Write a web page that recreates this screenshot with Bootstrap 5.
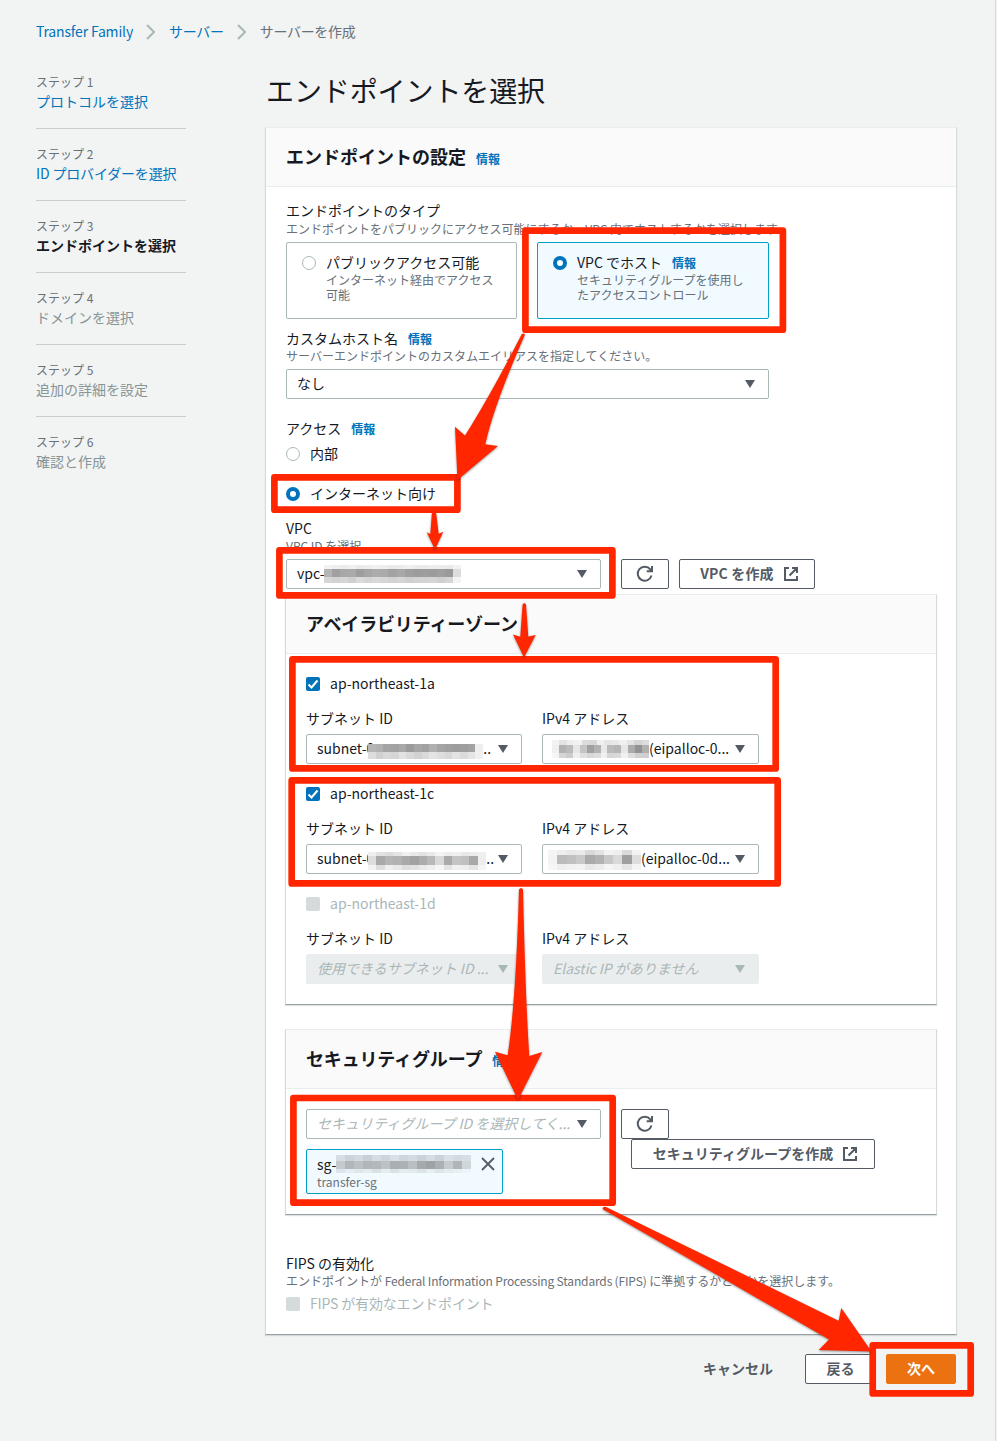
<!DOCTYPE html>
<html lang="ja">
<head>
<meta charset="utf-8">
<title>サーバーを作成</title>
<link href="https://cdn.jsdelivr.net/npm/bootstrap@5.3.0/dist/css/bootstrap.min.css" rel="stylesheet">
<style>
body{background:#f2f3f3;color:#16191f;font:14px/20px "Noto Sans CJK JP",sans-serif;height:1441px;overflow:hidden}
.page-shell{width:996px;height:1441px;border-right:1px solid #d5dbdb;padding:21px 0 0 36px}
a{color:#0073bb;text-decoration:none}
.crumbs{height:20px;color:#687078;white-space:nowrap;letter-spacing:-.3px}
.crumbs svg{margin:1px 14px 0 13px}
.steps{width:150px;margin-top:31px;flex:none}
.step{height:72px;color:#879596;white-space:nowrap}
.step b{color:#16191f}
.step small{display:block;font-size:12px;line-height:20px;color:#687078;margin-bottom:-1px}
.step:not(:last-child) hr{margin:17px 0 0;border-color:#c5cdcd;opacity:1}
.main-col{width:692px;margin-left:79px}
h1{font-size:28px;line-height:40px;font-weight:400;margin:29px 0 17px 1px;letter-spacing:-.1px}
.panel{background:#fff;border:1px solid #d5dbdb;border-top-color:#eaeded;border-bottom-color:#95a0a3;box-shadow:0 1px 1px rgba(0,28,36,.12)}
.panel-head{height:59px;background:#fafafa;border-bottom:1px solid #eaeded;padding:0 20px 2px;display:flex;align-items:center}
.panel-head h2{font-size:18px;line-height:24px;font-weight:700;margin:0}
.info{font-size:12px;font-weight:700;margin-left:10px;line-height:1}
.panel-head .info{margin-top:6px}
.main-body{padding:13px 20px 19px;height:1147px}
.desc{font-size:12px;line-height:15px;color:#687078;white-space:nowrap}
.tile{height:77px;border:1px solid #aab7b8;border-radius:2px;padding:9px 15px;display:flex;width:231px}
.tile.on{background:#f1faff;border-color:#00a1c9;width:232px}
.ctl{width:14px;height:14px;flex:none;border:1px solid #aab7b8;background:#fff;margin:4px 10px 0 0;border-radius:50%}
.ctl.on{border:4px solid #0073bb}
.box{width:14px;height:14px;flex:none;border-radius:2px;background:#0073bb;margin:4px 10px 0 0;display:flex}
.box.off{background:#d5dbdb}
.sel{height:30px;border:1px solid #aab7b8;border-radius:2px;background:#fff;padding:0 13px 2px 10px;display:flex;align-items:center;white-space:nowrap}
.sel::after{content:"";margin:2px 0 0 auto;border:5.5px solid transparent;border-top:8px solid #545b64;border-bottom:0}
.sel.dis{background:#eaeded;border-color:#eaeded;color:#aab7b8}
.sel.dis::after{border-top-color:#aab7b8}
.ph{color:#aab7b8;font-style:italic}
.btn-aws{height:30px;border:1px solid #545b64;border-radius:2px;background:#fff;color:#545b64;font-size:14px;font-weight:700;line-height:20px;padding:0 0 2px;display:flex;align-items:center;justify-content:center;white-space:nowrap}
.btn-aws svg{fill:none;stroke:#545b64;stroke-width:2;margin-top:2px}
.btn-ext{padding-left:5px}
.btn-ext svg{margin-left:9px}
.tight{letter-spacing:-.16px}
.zone{height:110px}
.f1{width:216px}.f2{width:217px}
.token{width:197px;height:45px;background:#f1faff;border:1px solid #00a1c9;border-radius:2px;margin-top:10px;padding:4px 7px 0 10px}
.mosaic{flex:none;display:block}
.sel .mosaic{margin-top:2px}
.marks{position:absolute;left:0;top:0;pointer-events:none}
</style>
</head>
<body>
<div class="page-shell">
  <nav class="crumbs d-flex align-items-center">
    <a href="#" style="letter-spacing:-.17px">Transfer Family</a>
    <svg width="9" height="16" fill="none" stroke="#aab7b8" stroke-width="2"><path d="M1 1l7 7-7 7"/></svg>
    <a href="#">サーバー</a>
    <svg width="9" height="16" fill="none" stroke="#aab7b8" stroke-width="2"><path d="M1 1l7 7-7 7"/></svg>
    <span>サーバーを作成</span>
  </nav>
  <div class="d-flex">
    <aside class="steps">
      <div class="step"><small>ステップ 1</small><a href="#">プロトコルを選択</a><hr></div>
      <div class="step"><small>ステップ 2</small><a href="#" class="tight">ID プロバイダーを選択</a><hr></div>
      <div class="step"><small>ステップ 3</small><b>エンドポイントを選択</b><hr></div>
      <div class="step"><small>ステップ 4</small>ドメインを選択<hr></div>
      <div class="step"><small>ステップ 5</small>追加の詳細を設定<hr></div>
      <div class="step"><small>ステップ 6</small>確認と作成</div>
    </aside>
    <main class="main-col">
      <h1>エンドポイントを選択</h1>
      <section class="panel">
        <div class="panel-head"><h2>エンドポイントの設定</h2><a class="info" href="#">情報</a></div>
        <div class="main-body">
          <div>エンドポイントのタイプ</div>
          <div class="desc" style="margin-top:1px">エンドポイントをパブリックにアクセス可能にするか、VPC 内でホストするかを選択します</div>
          <div class="d-flex" style="gap:20px;margin-top:6px">
            <div class="tile"><span class="ctl"></span><div><div>パブリックアクセス可能</div><div class="desc">インターネット経由でアクセス<br>可能</div></div></div>
            <div class="tile on"><span class="ctl on"></span><div><div>VPC でホスト<a class="info" href="#">情報</a></div><div class="desc">セキュリティグループを使用し<br>たアクセスコントロール</div></div></div>
          </div>
          <div style="margin-top:9px">カスタムホスト名<a class="info" href="#">情報</a></div>
          <div class="desc">サーバーエンドポイントのカスタムエイリアスを指定してください。</div>
          <div class="sel" style="width:483px;margin-top:6px">なし</div>
          <div style="margin-top:19px">アクセス<a class="info" href="#">情報</a></div>
          <div class="d-flex" style="margin-top:5px"><span class="ctl"></span>内部</div>
          <div class="d-flex" style="margin-top:20px"><span class="ctl on"></span>インターネット向け</div>
          <div style="margin-top:15px">VPC</div>
          <div class="desc">VPC ID を選択</div>
          <div class="d-flex" style="margin-top:6px">
            <div class="sel" style="width:315px">vpc-<svg class="mosaic" width="137" height="18" style="margin-left:-1px" data-rows="4,8,6" data-top="f2 ee eb f0 ea ec f0 ee ea ec f0 eb ea ee ec ea f2" data-mid="b4 a0 a8 aa 9e a6 ac aa a2 a8 a0 9c 9e 9c a0 9a ddd" data-bot="d6 d2 d6 d0 da d5 d9 d6 d2 d5 cf d3 d4 d6 d0 d6 f3"></svg></div>
            <button class="btn btn-aws" style="width:48px;margin-left:20px"><svg width="18" height="18" viewBox="0 0 18 18"><path d="M15.5 10.5A7 7 0 1 1 14.3 4.4L16 6.2M16 1v5.2h-5.3"/></svg></button>
            <button class="btn btn-aws btn-ext" style="width:136px;margin-left:10px"><span style="letter-spacing:.15px">VPC を作成</span><svg width="16" height="16" viewBox="0 0 16 16"><path d="M6 2H2v12h12v-4M9 2h5v5M14 2L6.500 9.500"/></svg></button>
          </div>
          <section class="panel" style="margin:5px -1px 0;height:411px">
            <div class="panel-head"><h2 class="tight">アベイラビリティーゾーン</h2></div>
            <div style="padding:19px 20px 0">
              <div class="zone">
                <div class="d-flex"><span class="box"><svg width="14" height="14" fill="none" stroke="#fff" stroke-width="2"><path d="M2.500 7.500l3 3L11.500 3.500"/></svg></span><span>ap-northeast-1a</span></div>
                <div class="d-flex" style="gap:20px;margin-top:15px"><div class="f1">サブネット ID</div><div class="f2">IPv4 アドレス</div></div>
                <div class="d-flex" style="gap:20px;margin-top:6px">
                  <div class="sel f1">subnet-0<svg class="mosaic" width="115" height="15" style="margin:6px 0 0 -6px" data-rows="8,7" data-mid="b5 b0 a4 a2 a8 9b9b9b a6 a1 b0 a5 a0 9d 9e a2 eee" data-bot="ddd d0 d8 d5 e2 d9 d2 dadada e4 dedede d8 e3 dcdcdc e5 f0"></svg>..</div>
                  <div class="sel f2"><svg class="mosaic" width="97" height="18" style="margin-left:-1px" data-rows="5,8,5" data-top="f2 e4 eee f2 ddd d8 f0 e6 e8 f0 e4 d5 ddd" data-mid="f0 b2 bbb e6 c5 a0 b2 e9 bbb b5 e6 ababab 929292 b0" data-bot="f6 d5 ccc f0 e0 d8 ddd f0 d6 d9 f0 ddd d0 cfcfcf"></svg>(eipalloc-0...</div>
                </div>
              </div>
              <div class="zone">
                <div class="d-flex"><span class="box"><svg width="14" height="14" fill="none" stroke="#fff" stroke-width="2"><path d="M2.500 7.500l3 3L11.500 3.500"/></svg></span><span>ap-northeast-1c</span></div>
                <div class="d-flex" style="gap:20px;margin-top:15px"><div class="f1">サブネット ID</div><div class="f2">IPv4 アドレス</div></div>
                <div class="d-flex" style="gap:20px;margin-top:6px">
                  <div class="sel f1">subnet-0<svg class="mosaic" width="118" height="18" style="margin:5px 0 0 -6px" data-rows="4,9,5" data-top="eee e2 ddd e4 f0 e8 e2 e9 f4 eee f0 e8 ececec f0" data-mid="ddd a9 b4 b2 a9 a2 ac b8 d8 aaa c4 c0 a8 eee" data-bot="f2 ddd eee e8 ddd e2 e9 eee f5 e4 f0 eee e4 f5"></svg>..</div>
                  <div class="sel f2"><svg class="mosaic" width="93" height="20" style="margin:4px 0 0 -5px" data-rows="5,9,6" data-top="f5 eee e8 eaeaea d8 e2 f2 eee dadada f3" data-mid="f3 bbb c0 c9 aaa b2 c8 d9 9f9fa2 ddd" data-bot="f6 eeeeee f1 f3 e8 ececec f5 f0 e5e5e5 f4"></svg>(eipalloc-0d...</div>
                </div>
              </div>
              <div class="zone">
                <div class="d-flex" style="color:#aab7b8"><span class="box off"></span><span>ap-northeast-1d</span></div>
                <div class="d-flex" style="gap:20px;margin-top:15px"><div class="f1">サブネット ID</div><div class="f2">IPv4 アドレス</div></div>
                <div class="d-flex" style="gap:20px;margin-top:6px">
                  <div class="sel dis f1"><span class="ph">使用できるサブネット ID ...</span></div>
                  <div class="sel dis f2"><span class="ph">Elastic IP がありません</span></div>
                </div>
              </div>
            </div>
          </section>
          <section class="panel" style="margin:24px -1px 0;height:186px">
            <div class="panel-head"><h2 class="tight">セキュリティグループ</h2><a class="info" href="#">情報</a></div>
            <div class="d-flex" style="padding:20px 20px 0">
              <div style="width:295px">
                <div class="sel"><span class="ph">セキュリティグループ ID を選択してく...</span></div>
                <div class="token">
                  <div class="d-flex align-items-center">sg-<svg class="mosaic" width="135" height="18" data-rows="6,8,4" data-top="d5dee3 cbd4d9 d1dadf c8d0d6 d4dde2 cdd5da d8e1e6 cfd7dc d3dbe0 cad3d8 d5dde2 cbd3d8 d9e1e6 d3dbe0 d7dfe4" data-mid="c4cbd0 b0b6ba bac1c5 b0b6ba b2b8bc bcc3c7 aaafb3 abb1b5 b9c0c4 a5aaad 9ea3a6 aab0b4 c5ccd0 afb5b9 d0d7db" data-bot="dde5ea e6eef3 dfe7ec e4ecf1 d8e0e5 e5edf2 dae2e7 e4ecf1 e2eaef dce4e9 e6eef3 dde5ea e4ecf1 e8f0f5 edf5fa"></svg><svg class="ms-auto" width="14" height="14" stroke="#545b64" stroke-width="1.800"><path d="M1 1l12 12M13 1L1 13"/></svg></div>
                  <div class="desc">transfer-sg</div>
                </div>
              </div>
              <div style="margin-left:20px">
                <button class="btn btn-aws" style="width:48px"><svg width="18" height="18" viewBox="0 0 18 18"><path d="M15.5 10.5A7 7 0 1 1 14.3 4.4L16 6.2M16 1v5.2h-5.3"/></svg></button>
                <button class="btn btn-aws btn-ext" style="width:244px;margin-left:10px">セキュリティグループを作成<svg width="16" height="16" viewBox="0 0 16 16"><path d="M6 2H2v12h12v-4M9 2h5v5M14 2L6.500 9.500"/></svg></button>
              </div>
            </div>
          </section>
          <div style="margin-top:38px">FIPS の有効化</div>
          <div class="desc">エンドポイントが <span class="tight">Federal Information Processing Standards (FIPS)</span> に準拠するかどうかを選択します。</div>
          <div class="d-flex" style="margin-top:5px;color:#aab7b8"><span class="box off"></span><span class="tight">FIPS が有効なエンドポイント</span></div>
        </div>
      </section>
      <div class="d-flex justify-content-end align-items-center" style="margin:19px 1px 0 0">
        <button class="btn btn-aws border-0 bg-transparent" style="width:70px;margin-right:32px">キャンセル</button>
        <button class="btn btn-aws" style="width:71px;margin-right:10px">戻る</button>
        <button class="btn btn-aws text-white" style="width:70px;background:#ec7211;border-color:#ec7211">次へ</button>
      </div>
    </main>
  </div>
</div>
<svg class="marks" width="997" height="1441" viewBox="0 0 997 1441">
  <g fill="none" stroke="#ff2600" stroke-width="6.700" stroke-linejoin="round">
    <rect x="525.400" y="230.700" width="257.500" height="99"/>
    <rect x="274.400" y="477.400" width="183" height="32.300"/>
    <rect x="279.400" y="550.400" width="333" height="45"/>
    <rect x="292.400" y="659.400" width="483.300" height="109"/>
    <rect x="291.700" y="780.400" width="486" height="103"/>
    <rect x="293.400" y="1098" width="319.300" height="104.700"/>
    <rect x="872.700" y="1345.400" width="98" height="48"/>
  </g>
  <g fill="#ff2600" style="filter:drop-shadow(0 1.500px 1.200px rgba(0,0,0,.4))">
    <path d="M521.600 334.500Q523 332.500 525 334.500Q494 405 485.300 444.300L498 446L457.500 480L455 426.700L465 435.500Q490 396 521.600 334.500Z"/>
    <path d="M432 512h4l2.700 21.700 4.600-2L435 549.500l-8.300-17.200 3.600 1.700z"/>
    <path d="M522.600 604.500q1.700-2.500 3.400 0l2.300 32 7.400-1.500L524 657.500 513 634.500l7.300 2.200z"/>
    <path d="M519 889.500q2-3 4 0Q525.500 1000 529.300 1056L542.300 1052 518 1100 495 1051.700l12.700 3.500Q516 1000 519 889.500z"/>
    <path d="M602.500 1209q.5-3 3.500-2L838.700 1320.700 841.300 1308 871.500 1351.500 818.700 1350l10.300-10.500z"/>
  </g>
</svg>
<script src="https://cdn.jsdelivr.net/npm/bootstrap@5.3.0/dist/js/bootstrap.bundle.min.js"></script>
<script>
// Fill each masked identifier with rows of flat colour cells.
document.querySelectorAll('.mosaic').forEach(svg => {
  const w = +svg.getAttribute('width');
  const heights = svg.dataset.rows.split(',').map(Number);
  const rows = [svg.dataset.top, svg.dataset.mid, svg.dataset.bot].filter(Boolean);
  let y = 0;
  svg.setAttribute('shape-rendering', 'crispEdges');
  rows.forEach((row, r) => {
    const cells = row.split(' ');
    const edge = i => Math.round(i * w / cells.length);
    cells.forEach((c, i) => {
      const rect = document.createElementNS('http://www.w3.org/2000/svg', 'rect');
      rect.setAttribute('x', edge(i)); rect.setAttribute('y', y);
      rect.setAttribute('width', edge(i + 1) - edge(i)); rect.setAttribute('height', heights[r]);
      rect.setAttribute('fill', '#' + (c.length === 2 ? c + c + c : c));
      svg.appendChild(rect);
    });
    y += heights[r];
  });
});
</script>
</body>
</html>
